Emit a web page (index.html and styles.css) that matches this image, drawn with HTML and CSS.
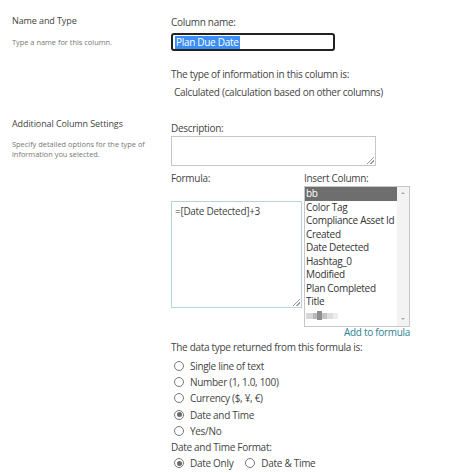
FILE: index.html
```html
<!DOCTYPE html>
<html>
<head>
<meta charset="utf-8">
<link rel="stylesheet" href="styles.css">
</head>
<body>
<div class="page">
  <section class="row row-first">
    <div class="side">
      <div class="side-title">Name and Type</div>
      <div class="side-desc first-desc">Type a name for this column.</div>
    </div>
    <div class="main">
      <div class="label">Column name:</div>
      <div class="name-input"><span class="sel">Plan Due Date</span></div>
      <div class="label type-label">The type of information in this column is:</div>
      <div class="label calc">Calculated (calculation based on other columns)</div>
    </div>
  </section>
  <section class="row row-second">
    <div class="side">
      <div class="side-title">Additional Column Settings</div>
      <div class="side-desc second-desc">Specify detailed options for the type of information you selected.</div>
    </div>
    <div class="main">
      <div class="label">Description:</div>
      <div class="textarea desc-area"><span class="grip"></span></div>
      <div class="formula-grid">
        <div class="formula-col">
          <div class="label">Formula:</div>
          <div class="textarea formula-area">=[Date Detected]+3<span class="grip"></span></div>
        </div>
        <div class="insert-col">
          <div class="label">Insert Column:</div>
          <div class="listbox">
            <div class="items">
              <div class="item selected">bb</div>
              <div class="item">Color Tag</div>
              <div class="item">Compliance Asset Id</div>
              <div class="item">Created</div>
              <div class="item">Date Detected</div>
              <div class="item">Hashtag_0</div>
              <div class="item">Modified</div>
              <div class="item">Plan Completed</div>
              <div class="item">Title</div>
              <div class="item blur"><i class="b1"></i><i class="b2"></i><i class="b3"></i><i class="b4"></i><i class="b5"></i><i class="b6"></i></div>
            </div>
            <div class="scroll">
              <span class="arrow up"></span>
              <span class="arrow down"></span>
            </div>
          </div>
          <div class="add-link">Add to formula</div>
        </div>
      </div>
      <div class="label ret-label">The data type returned from this formula is:</div>
      <div class="radios">
        <div class="radio"><span class="dot"></span>Single line of text</div>
        <div class="radio"><span class="dot"></span>Number (1, 1.0, 100)</div>
        <div class="radio"><span class="dot"></span>Currency ($, ¥, €)</div>
        <div class="radio"><span class="dot on"></span>Date and Time</div>
        <div class="radio"><span class="dot"></span>Yes/No</div>
      </div>
      <div class="label fmt-label">Date and Time Format:</div>
      <div class="radio-inline">
        <div class="radio"><span class="dot on"></span>Date Only</div>
        <div class="radio"><span class="dot"></span>Date &amp; Time</div>
      </div>
    </div>
  </section>
</div>
</body>
</html>
```

FILE: styles.css
```css
html, body {
  margin: 0;
  padding: 0;
  background: #ffffff;
}
body {
  font-family: "Open Sans", "Noto Sans", sans-serif;
  color: #444444;
  width: 474px;
  height: 473px;
  overflow: hidden;
}
.page {
  padding-left: 12px;
}
.row {
  display: grid;
  grid-template-columns: 159px 1fr;
}
.row-first {
  height: 116px;
}
.side-title {
  font-size: 9px;
  line-height: 12px;
  color: #444444;
  padding-top: 15px;
  letter-spacing: -0.1px;
}
.row-second .side-title {
  padding-top: 2px;
}
.side-desc {
  font-size: 7.4px;
  line-height: 10.4px;
  color: #777777;
}
.first-desc {
  margin-top: 10px;
}
.second-desc {
  margin-top: 9px;
  width: 150px;
}
.main {
  padding-top: 16px;
}
.row-second .main {
  padding-top: 6px;
}
.label {
  font-size: 10px;
  line-height: 12px;
  color: #444444;
  letter-spacing: -0.3px;
}
.name-input {
  margin-top: 5px;
  width: 164px;
  height: 18px;
  box-sizing: border-box;
  border: 2px solid #222222;
  border-radius: 3px;
  padding: 1px 0 0 2px;
  font-size: 10px;
  line-height: 12px;
  letter-spacing: -0.3px;
}
.sel {
  background: #3a8ef6;
  color: #ffffff;
  display: inline-block;
  padding: 0 1px;
  line-height: 13px;
}
.type-label {
  margin-top: 17px;
}
.calc {
  margin-top: 6px;
  padding-left: 3px;
}
.textarea {
  position: relative;
  box-sizing: border-box;
  border: 1px solid #c6c6c6;
  background: #ffffff;
}
.desc-area {
  margin-top: 2px;
  width: 205px;
  height: 30px;
}
.grip {
  position: absolute;
  right: 1px;
  bottom: 1px;
  width: 7px;
  height: 7px;
  background: linear-gradient(135deg, transparent 0 45%, #999 45% 55%, transparent 55% 70%, #999 70% 80%, transparent 80%);
}
.formula-grid {
  margin-top: 6px;
  display: grid;
  grid-template-columns: 133px 106px;
}
.formula-area {
  margin-top: 17px;
  width: 131px;
  height: 107px;
  border-color: #b5d5d8;
  padding: 3px 0 0 3px;
  font-size: 10px;
  line-height: 12px;
  letter-spacing: -0.3px;
  color: #444444;
}
.listbox {
  margin-top: 2px;
  width: 106px;
  height: 141px;
  box-sizing: border-box;
  border: 1px solid #c6c6c6;
  display: flex;
}
.items {
  flex: 1;
  padding-top: 0;
}
.item {
  height: 13.5px;
  line-height: 13.5px;
  font-size: 10px;
  color: #333333;
  padding-left: 1px;
  letter-spacing: -0.3px;
  white-space: nowrap;
}
.item.selected {
  background: #6e6e6e;
  color: #ffffff;
}
.blur {
  display: flex;
  align-items: center;
  height: 14px;
}
.blur i {
  display: block;
  height: 6px;
}
.b1 { width: 7px; background: #d7d7d7; }
.b2 { width: 4px; background: #b9b9b9; }
.b3 { width: 5px; height: 9px !important; background: #8f8f8f; }
.b4 { width: 5px; background: #c4c4c4; }
.b5 { width: 6px; background: #dedede; }
.b6 { width: 5px; background: #ececec; }
.scroll {
  width: 12px;
  background: #f3f3f3;
  position: relative;
}
.arrow {
  position: absolute;
  left: 4px;
  width: 0;
  height: 0;
  border-left: 2px solid transparent;
  border-right: 2px solid transparent;
}
.arrow.up {
  top: 5px;
  border-bottom: 2px solid #a8a8a8;
}
.arrow.down {
  bottom: 6px;
  border-top: 2px solid #a8a8a8;
}
.add-link {
  width: 106px;
  text-align: right;
  font-size: 10px;
  line-height: 12px;
  margin-top: -1px;
  color: #2e8290;
  letter-spacing: -0.3px;
}
.ret-label {
  margin-top: 3px;
}
.radios {
  margin-top: 5px;
}
.radio {
  display: flex;
  align-items: center;
  height: 16.2px;
  font-size: 10px;
  color: #444444;
  letter-spacing: -0.3px;
  padding-left: 3px;
}
.dot {
  width: 10px;
  height: 10px;
  border: 1px solid #777777;
  border-radius: 50%;
  margin-right: 6px;
  box-sizing: border-box;
  position: relative;
  background: #ffffff;
}
.dot.on::after {
  content: "";
  position: absolute;
  left: 1.5px;
  top: 1.5px;
  width: 5px;
  height: 5px;
  border-radius: 50%;
  background: #6a6a6a;
}
.fmt-label {
  margin-top: 2px;
}
.radio-inline {
  margin-top: 2px;
  display: flex;
}
.radio-inline .radio {
  margin-right: 9px;
}
```
